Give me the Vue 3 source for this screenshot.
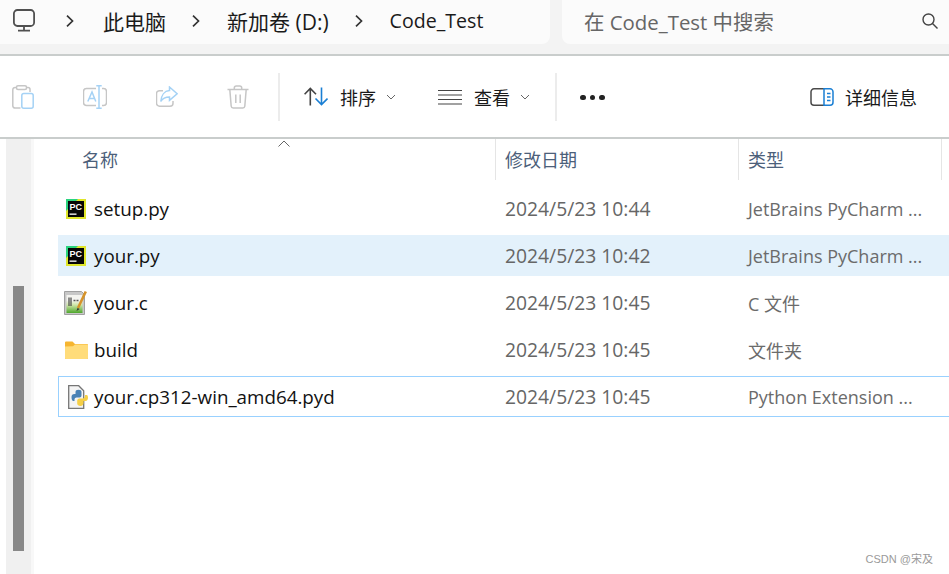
<script setup>
const files = [
  { name: 'setup.py', date: '2024/5/23 10:44', type: 'JetBrains PyCharm ...', icon: 'pc' },
  { name: 'your.py', date: '2024/5/23 10:42', type: 'JetBrains PyCharm ...', icon: 'pc', state: 'selected' },
  { name: 'your.c', date: '2024/5/23 10:45', type: 'C 文件', icon: 'c' },
  { name: 'build', date: '2024/5/23 10:45', type: '文件夹', icon: 'folder' },
  { name: 'your.cp312-win_amd64.pyd', date: '2024/5/23 10:45', type: 'Python Extension ...', icon: 'pyd', state: 'focused' },
]
</script>

<template>
  <div class="window">
    <div class="topbar">
      <div class="crumbs">
        <svg class="pc-icon" width="24" height="23" viewBox="0 0 24 23" fill="none" stroke="#505050" stroke-width="1.8">
          <rect x="1.900" y="1" width="20.200" height="16" rx="3.500" />
          <path d="M12 17v4.500M6 21.600h12" />
        </svg>
        <svg class="chev first" width="8" height="12" viewBox="0 0 8 12" fill="none" stroke="#333" stroke-width="1.700"><path d="M1 .7L6.500 6 1 11.300" /></svg>
        <span class="crumb">此电脑</span>
        <svg class="chev" width="8" height="12" viewBox="0 0 8 12" fill="none" stroke="#333" stroke-width="1.700"><path d="M1 .7L6.500 6 1 11.300" /></svg>
        <span class="crumb">新加卷 (D:)</span>
        <svg class="chev" width="8" height="12" viewBox="0 0 8 12" fill="none" stroke="#333" stroke-width="1.700"><path d="M1 .7L6.500 6 1 11.300" /></svg>
        <span class="crumb latin">Code_Test</span>
      </div>
      <div class="search">
        <span class="search-text">在 Code_Test 中搜索</span>
        <svg width="18" height="18" viewBox="0 0 18 18" fill="none" stroke="#444" stroke-width="1.400">
          <circle cx="7.500" cy="7.500" r="5.500" />
          <path d="M11.500 11.500l5 5" />
        </svg>
      </div>
    </div>

    <div class="toolbar">
      <div class="tools-off">
        <svg class="t1" width="22" height="24" viewBox="0 0 22 24" fill="none" stroke="#c6c6c6" stroke-width="1.500">
          <path d="M4.500 2.500H3a2.200 2.200 0 0 0-2.200 2.200v16.100A2.200 2.200 0 0 0 3 23h5.500" />
          <path d="M14.500 2.500H16a2 2 0 0 1 2 2V7" />
          <rect x="4.500" y=".8" width="10" height="3.600" rx="1.500" />
          <rect x="9.800" y="8.400" width="11.400" height="14.800" rx="2" stroke="#a5d2f5" />
        </svg>
        <svg class="t2" width="24" height="24" viewBox="0 0 24 24" fill="none" stroke="#c6c6c6" stroke-width="1.500">
          <path d="M13 3.500H3.500a3 3 0 0 0-3 3v11a3 3 0 0 0 3 3H13" />
          <path d="M19 3.500h1.500a3 3 0 0 1 3 3v11a3 3 0 0 1-3 3H19" />
          <path d="M16 1v22M13.300 .8h5.400M13.300 23.200h5.400" stroke="#a5d2f5" />
          <path d="M4.800 16.500L9 7l3.800 9.500M6 13.500h5.700" stroke="#a5d2f5" />
        </svg>
        <svg class="t3" width="22" height="21" viewBox="0 0 22 21" fill="none" stroke="#c6c6c6" stroke-width="1.500">
          <path d="M7 4.700H3.500a3 3 0 0 0-3 3v9.500a3 3 0 0 0 3 3H14a3 3 0 0 0 3-3V15" />
          <path d="M13.500 1l7.600 6.700-7.600 6.700V11c-4 0-6.800 1.200-8.700 4.500C5.200 9.300 8.500 5 13.500 4.600z" stroke="#a5d2f5" />
        </svg>
        <svg class="t4" width="22" height="24" viewBox="0 0 22 24" fill="none" stroke="#c6c6c6" stroke-width="1.500">
          <path d="M.5 4.500h21M7.300 4.500V3a2 2 0 0 1 2-2h3.400a2 2 0 0 1 2 2v1.500M2.800 4.500l1.400 16.700a2 2 0 0 0 2 1.800h9.600a2 2 0 0 0 2-1.800l1.400-16.700M8.800 9.500v8.500M13.200 9.500v8.500" />
        </svg>
      </div>
      <div class="divider"></div>
      <div class="tool sort">
        <svg width="24" height="19" viewBox="0 0 24 19" fill="none" stroke-width="1.600">
          <path d="M6.300 18.500V1.500M.6 7.200L6.300 1.500 12 7.200" stroke="#444" />
          <path d="M17.500 .5v17M11.500 11.500l6 6 6-6" stroke="#1a7fd4" />
        </svg>
        <span>排序</span>
        <svg width="10" height="6" viewBox="0 0 10 6" fill="none" stroke="#666"><path d="M1 1l4 4 4-4" /></svg>
      </div>
      <div class="tool view">
        <svg width="24" height="16" viewBox="0 0 24 16" fill="none" stroke="#444" stroke-width="1.200">
          <path d="M0 1.500h24M0 6h24M0 10.500h24M0 15h24" />
        </svg>
        <span>查看</span>
        <svg width="10" height="6" viewBox="0 0 10 6" fill="none" stroke="#666"><path d="M1 1l4 4 4-4" /></svg>
      </div>
      <div class="divider"></div>
      <div class="dots"><i></i><i></i><i></i></div>
      <div class="tool details">
        <svg width="24" height="18" viewBox="0 0 24 18" fill="none" stroke-width="1.500">
          <path d="M14 .8H4a3 3 0 0 0-3 3v10.400a3 3 0 0 0 3 3h10" stroke="#4a4a4a" />
          <path d="M14 .8h6a3 3 0 0 1 3 3v10.400a3 3 0 0 1-3 3h-6z" stroke="#1a7fd4" />
          <path d="M17 5.500h3.500M17 9h3.500M17 12.500h3.500" stroke="#1a7fd4" />
        </svg>
        <span>详细信息</span>
      </div>
    </div>

    <div class="body">
      <div class="rail">
        <div class="track"><div class="thumb"></div></div>
      </div>
      <div class="main">
        <div class="sort-mark">
          <svg width="12" height="7" viewBox="0 0 12 7" fill="none" stroke="#666"><path d="M.5 6.500L6 1l5.500 5.500" /></svg>
        </div>
        <div class="head">
          <div class="col-name">名称</div>
          <div class="col-date">修改日期</div>
          <div class="col-type">类型</div>
        </div>
        <div class="list">
          <div v-for="f in files" :key="f.name" class="row" :class="f.state">
            <span class="icon">
              <svg v-if="f.icon === 'pc'" width="20" height="20" viewBox="0 0 20 20">
                <rect width="20" height="20" fill="#dfe52a" />
                <path d="M0 0h12L0 12z" fill="#2bd47f" />
                <rect x="2" y="2" width="16" height="16" fill="#060606" />
                <text x="3.500" y="10.500" font-size="9" font-weight="700" fill="#fff" font-family="Liberation Sans, sans-serif">PC</text>
                <rect x="3.500" y="14.500" width="7" height="1.300" fill="#fff" />
              </svg>
              <svg v-else-if="f.icon === 'c'" class="ic-c" width="24" height="25" viewBox="0 0 24 25">
                <defs>
                  <linearGradient id="cpage" x1="0" y1="0" x2="0" y2="1">
                    <stop offset="0.300" stop-color="#f4f4f0" />
                    <stop offset="0.550" stop-color="#cfe6a8" />
                    <stop offset="1" stop-color="#4da62c" />
                  </linearGradient>
                </defs>
                <path d="M.5 1.500h17l3 3v20H.5z" fill="#c8c8c8" stroke="#a0a0a0" />
                <rect x="2.500" y="5" width="16" height="18" fill="url(#cpage)" />
                <path d="M5 7.500v8.500M7 7.500v8.500" stroke="#444" stroke-width="1.200" />
                <path d="M9.500 10.500h5" stroke="#555" stroke-width="1.500" stroke-dasharray="2 1" />
                <path d="M14 18L21.800 1.500" stroke="#d6932a" stroke-width="2.600" />
                <path d="M12.500 21l1-3 2.200 1z" fill="#333" />
              </svg>
              <svg v-else-if="f.icon === 'folder'" width="23" height="18" viewBox="0 0 23 18">
                <path d="M0 1.500a1 1 0 0 1 1-1h6.500l2.500 2.500h12a1 1 0 0 1 1 1V17a1 1 0 0 1-1 1H1a1 1 0 0 1-1-1z" fill="#f6b530" />
                <path d="M0 5.500l8-.2L10 3.500h12a1 1 0 0 1 1 1V17a1 1 0 0 1-1 1H1a1 1 0 0 1-1-1z" fill="#ffdc7a" />
              </svg>
              <svg v-else class="ic-py" width="20" height="24" viewBox="0 0 20 24">
                <path d="M.7 .7h10l5 5v17.600H.7z" fill="#f4f4f4" stroke="#767676" stroke-width="1.300" />
                <path d="M3.500 12c0-2 1-3 3-3h1V7c0-1.500 1-2.300 3-2.300s3 .8 3 2.300v3.500c0 1-.8 2-2 2H8.500c-1 0-2 .8-2 2v1.500H5.500C4 16 3.500 14 3.500 12z" fill="#4a82b5" />
                <path d="M19 10c.8.500 1 1.800 1 3s-.8 3-2.500 3h-2v2c0 1.500-1 3-3 3s-3.300-1-3.300-2.500v-3c0-1 1-2 2-2h3.300c1.500 0 2.500-1 2.500-2.500v-1z" fill="#f5cf47" />
              </svg>
            </span>
            <span class="name">{{ f.name }}</span>
            <span class="date">{{ f.date }}</span>
            <span class="type">{{ f.type }}</span>
          </div>
        </div>
        <div class="mark">CSDN @宋及</div>
      </div>
    </div>
  </div>
</template>

<style>
html, body { margin: 0; background: #fff; overflow: hidden; }
</style>

<style scoped>
.window {
  width: 949px;
  height: 574px;
  display: flex;
  flex-direction: column;
  overflow: hidden;
  background: #fff;
  font-family: "Open Sans", "Noto Sans CJK SC", sans-serif;
  color: #1a1a1a;
  font-size: 18px;
}
.topbar {
  box-sizing: border-box;
  background: #f3f3f3;
  border-bottom: 2px solid #c9cdcc;
  height: 56px;
  flex: none;
  display: flex;
  gap: 12px;
  align-items: flex-start;
}
.crumbs, .search {
  height: 44px;
  background: #fbfbfb;
  display: flex;
  align-items: center;
  box-sizing: border-box;
}
.crumbs {
  width: 550px;
  border-radius: 0 0 8px 0;
  padding: 0 0 3px 12px;
}
.pc-icon { margin-right: 30px; }
.search {
  flex: 1;
  border-radius: 0 0 0 8px;
  padding: 0 10px 2px 22px;
  justify-content: space-between;
  color: #666;
}
.search-text { font-size: 20.400px; }
.chev { flex: none; margin-right: 27px; }
.chev.first { margin-right: 29px; }
.crumb { font-size: 21px; white-space: nowrap; margin-right: 26px; }
.crumb.latin { font-size: 19.600px; }
.toolbar {
  height: 81px;
  flex: none;
  display: flex;
  align-items: center;
  border-bottom: 2px solid #c9cdcc;
}
.tools-off {
  display: flex;
  align-items: center;
  padding-left: 12px;
  gap: 49px;
  width: 278px;
  box-sizing: border-box;
}
.divider {
  width: 2px;
  height: 48px;
  background: #ececec;
  flex: none;
}
.tool {
  display: flex;
  align-items: center;
  white-space: nowrap;
}
.tool span { font-size: 18px; }
.sort { margin-left: 24px; gap: 12px; width: 134px; }
.sort span { margin-right: -2px; }
.view { gap: 12px; width: 117px; }
.view span { margin-right: -2px; }
.dots { display: flex; gap: 4px; margin: 2px 0 0 23px; }
.dots i { width: 5.500px; height: 5.500px; border-radius: 50%; background: #222; }
.details { margin-left: auto; margin-right: 32px; gap: 11px; }
.body { flex: 1; display: flex; min-height: 0; }
.rail {
  width: 34px;
  padding-left: 6px;
  box-sizing: border-box;
  border-right: 3px solid #f8f8f8;
  flex: none;
}
.track {
  width: 25px;
  height: 100%;
  background: #f0f0f0;
  padding: 147px 7px 0;
  box-sizing: border-box;
}
.thumb { height: 265px; width: 11px; background: #888; }
.main { flex: 1; position: relative; min-width: 0; }
.sort-mark { position: absolute; left: 244px; top: 1px; line-height: 0; }
.head {
  height: 41px;
  display: flex;
  align-items: stretch;
  color: #4c607a;
  font-size: 18px;
  margin-bottom: 8px;
}
.head > div { display: flex; align-items: center; box-sizing: border-box; padding-bottom: 2px; }
.col-name { width: 462px; padding-left: 48px; border-right: 1px solid #e5e5e5; }
.col-date { width: 243px; padding-left: 9px; border-right: 1px solid #e5e5e5; }
.col-type { width: 203px; padding-left: 9px; border-right: 1px solid #e5e5e5; }
.list { display: flex; flex-direction: column; gap: 6px; margin-left: 24px; }
.row {
  height: 41px;
  display: flex;
  align-items: center;
  box-sizing: border-box;
  white-space: nowrap;
  font-size: 18.800px;
}
.row.selected { background: #e3f1fb; }
.row.focused { border: 1px solid #99d1ff; border-right: none; }
.icon { width: 36px; flex: none; display: flex; justify-content: center; }
.row.focused .icon { margin-left: -1px; }
.ic-py { margin-left: 3px; }
.name { width: 411px; color: #111; }
.date { width: 243px; color: #666; font-size: 19.300px; }
.type { color: #6b6b6b; font-size: 18px; }
.mark {
  position: absolute;
  right: 16px;
  bottom: 8px;
  font: 11px "Liberation Sans", "Noto Sans CJK SC", sans-serif;
  color: #9a9a9a;
}
</style>
